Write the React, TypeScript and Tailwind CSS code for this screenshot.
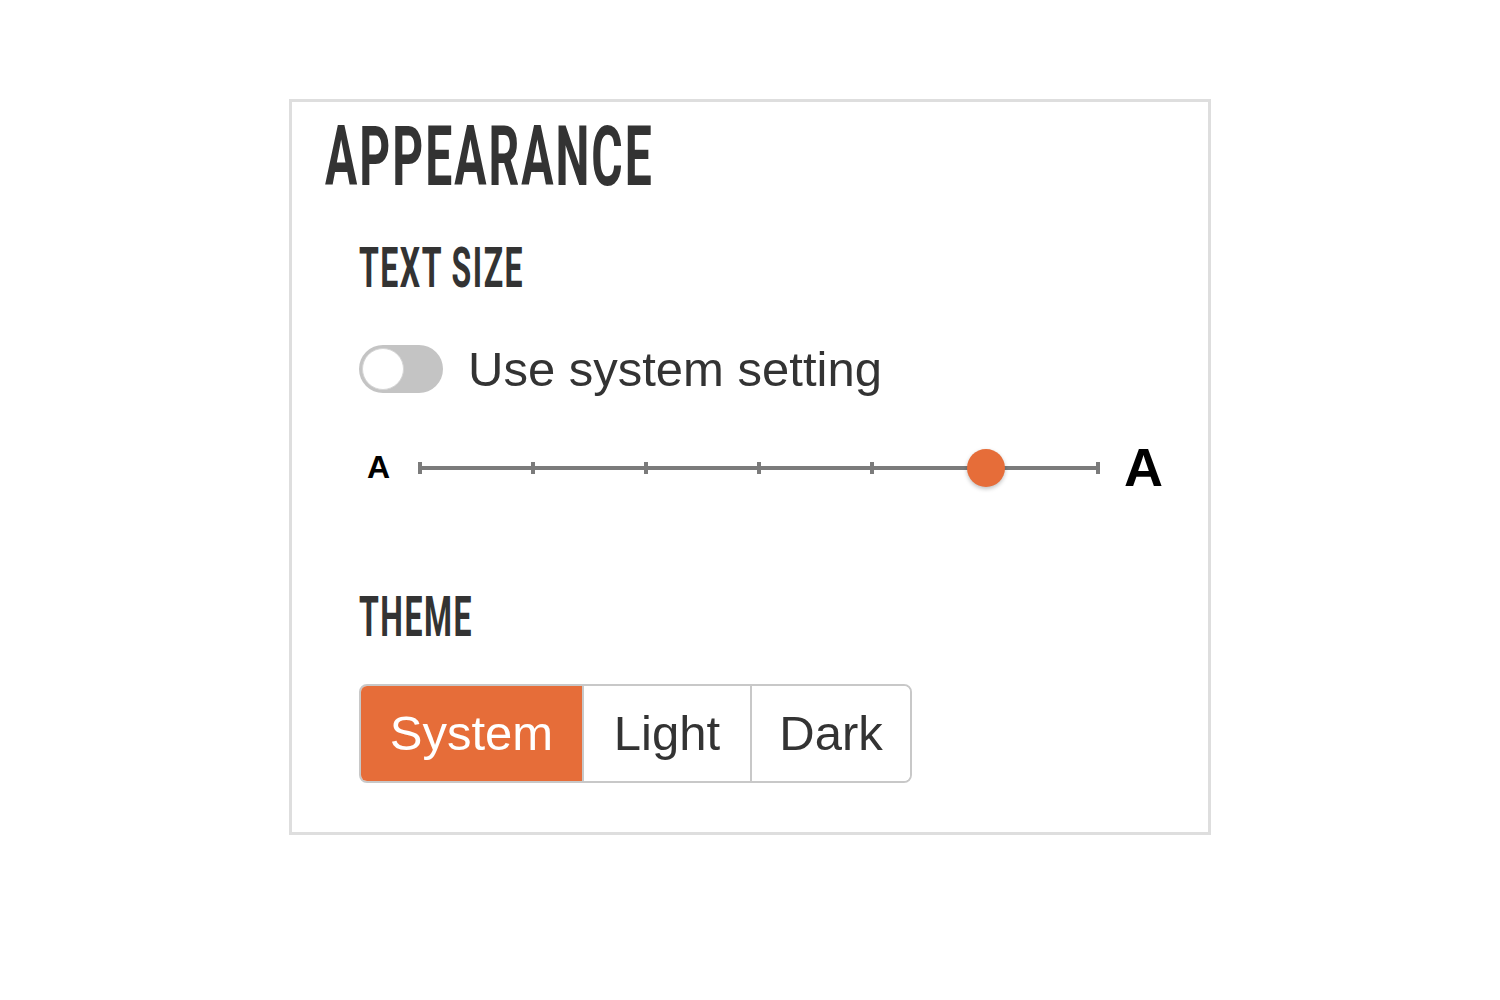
import { useState } from "react";

const headFont = { fontFamily: "Roboto, 'Liberation Sans', sans-serif" };
const bodyFont = { fontFamily: "'Liberation Sans', Arial, sans-serif" };

const ticks = [0, 1, 2, 3, 4, 5, 6];

const App = () => {
  const [useSystem, setUseSystem] = useState(false);
  const [size, setSize] = useState(5);
  const [theme, setTheme] = useState("System");

  return (
    <div className="min-h-screen bg-white flex justify-center pt-[99px]" style={bodyFont}>
      <div className="w-[922px] h-[736px] border-[3px] border-[#dedede] flex flex-col">
        {/* title */}
        <div className="h-[110px] flex items-center pl-[33px]">
          <h1
            className="text-[48px] leading-none font-bold tracking-[2px] text-[#333] inline-block scale-y-[1.75] origin-center"
            style={headFont}
          >
            APPEARANCE
          </h1>
        </div>

        <div className="pl-[67px] flex flex-col">
          {/* text size */}
          <div className="h-[112px] flex items-center">
            <h2
              className="text-[32px] leading-none font-bold tracking-[1.5px] text-[#333] inline-block scale-y-[1.73] origin-center"
              style={headFont}
            >
              TEXT SIZE
            </h2>
          </div>

          <div className="h-[90px] flex items-center">
            <button
              onClick={() => setUseSystem(!useSystem)}
              className={
                "relative w-[84px] h-[48px] rounded-full " +
                (useSystem ? "bg-[#e66d39]" : "bg-[#c4c4c4]")
              }
            >
              <span
                className={
                  "absolute top-[3px] w-[42px] h-[42px] rounded-full bg-white border border-[#d6d6d6] " +
                  (useSystem ? "left-[39px]" : "left-[3px]")
                }
              />
            </button>
            <span className="ml-[25px] text-[49px] leading-none text-[#333]">Use system setting</span>
          </div>

          <div className="h-[106px] flex items-center">
            <span className="ml-2 w-[23px] text-[32px] leading-none font-bold text-black">A</span>
            <div className="relative ml-[28px] mt-[2px] w-[681px] h-[4px] bg-[#7b7b7b]">
              {ticks.map((t) => (
                <span
                  key={t}
                  onClick={() => setSize(t)}
                  className="absolute top-[-4px] w-[4px] h-[12px] bg-[#7b7b7b]"
                  style={{ left: t * 113 }}
                />
              ))}
              <span
                className="absolute top-[-17px] w-[38px] h-[38px] rounded-full bg-[#e66d39] shadow-[0_2px_4px_rgba(0,0,0,0.25)]"
                style={{ left: size * 113 - 16 }}
              />
            </div>
            <span className="ml-[25px] text-[54px] leading-none font-bold text-black">A</span>
          </div>

          {/* theme */}
          <div className="h-[90px] mt-[52px] flex items-center">
            <h2
              className="text-[32px] leading-none font-bold tracking-[1.5px] text-[#333] inline-block scale-y-[1.73] origin-center"
              style={headFont}
            >
              THEME
            </h2>
          </div>

          <div className="mt-[22px] flex">
            <div className="flex h-[99px] border-2 border-[#c8c8c8] rounded-[8px] overflow-hidden">
              {["System", "Light", "Dark"].map((t, i) => (
                <button
                  key={t}
                  onClick={() => setTheme(t)}
                  className={
                    "h-full flex items-center justify-center text-[49px] leading-none " +
                    (i > 0 ? "border-l-2 border-[#c8c8c8] " : "") +
                    (i === 0 ? "w-[221px] " : i === 1 ? "w-[168px] " : "w-[160px] ") +
                    (theme === t ? "bg-[#e66d39] text-white" : "bg-white text-[#333]")
                  }
                >
                  {t}
                </button>
              ))}
            </div>
          </div>
        </div>
      </div>
    </div>
  );
};

export default App;
